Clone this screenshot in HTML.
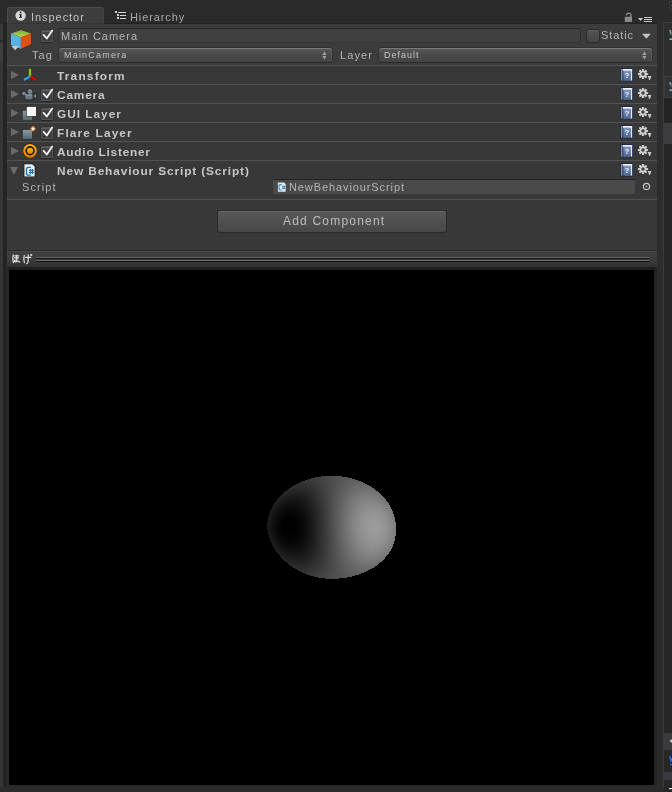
<!DOCTYPE html>
<html><head><meta charset="utf-8">
<style>
*{margin:0;padding:0;box-sizing:border-box}
html,body{width:672px;height:792px;overflow:hidden;background:#2a2a2a;font-family:"Liberation Sans",sans-serif;}
.a{position:absolute}
.t{position:absolute;white-space:nowrap;font-size:11px;line-height:1;color:#b4b4b4;will-change:transform}
.b{font-weight:bold;color:#c6c6c6;transform:scaleX(1.08);transform-origin:0 0}
.sep{position:absolute;left:7px;width:650px;height:1px;background:#525252}
.tri{position:absolute;width:0;height:0;border-top:4.5px solid transparent;border-bottom:4.5px solid transparent;border-left:8px solid #6a6a6a}
.cb{position:absolute;width:12px;height:12px;border-radius:2.5px;background:linear-gradient(#454545,#3c3c3c);box-shadow:inset 0 0 0 1px #555,inset 0 1px 0 1px #5e5e5e,0 0 0 0.6px #2a2a2a,0 1px 1px #222}
.dd{position:absolute;height:14px;border-radius:3px;background:linear-gradient(#585858,#4a4a4a 50%,#444);box-shadow:inset 0 1px 0 #7a7a7a,inset -1px 0 0 #5a5a5a,0 1px 0 #2a2a2a,0 0 0 1px #303030}
.sph i{position:absolute;width:1px;display:block}
</style></head><body>
<svg width="0" height="0" style="position:absolute"><defs>
<linearGradient id="bk" x1="0" y1="0" x2="0" y2="1"><stop offset="0" stop-color="#7d95bf"/><stop offset="1" stop-color="#4d6690"/></linearGradient>
<linearGradient id="sl" x1="0" y1="0" x2="0" y2="1"><stop offset="0" stop-color="#8a9ca6"/><stop offset="1" stop-color="#55666f"/></linearGradient>
<linearGradient id="cg" x1="0" y1="0" x2="0" y2="1"><stop offset="0" stop-color="#7fa83a"/><stop offset="1" stop-color="#b8d84a"/></linearGradient>
<radialGradient id="fl"><stop offset="0" stop-color="#fff"/><stop offset="0.35" stop-color="#ffb040"/><stop offset="0.7" stop-color="#e06800" stop-opacity="0.8"/><stop offset="1" stop-color="#803000" stop-opacity="0"/></radialGradient>
<linearGradient id="or" x1="0" y1="0" x2="0" y2="1"><stop offset="0" stop-color="#ffb400"/><stop offset="1" stop-color="#f08000"/></linearGradient>
</defs></svg>
<!-- left column -->
<div class="a" style="left:0;top:24px;width:3px;height:16px;background:#383838"></div>
<div class="a" style="left:0;top:40px;width:3px;height:1px;background:#262626"></div>
<div class="a" style="left:0;top:41px;width:3px;height:2px;background:#2f2f2f"></div>
<div class="a" style="left:0;top:43px;width:3px;height:18px;background:#3e3e3e"></div>
<div class="a" style="left:0;top:61px;width:3px;height:726px;background:#363636"></div>
<div class="a" style="left:3px;top:23px;width:3px;height:764px;background:#232323"></div>
<div class="a" style="left:6px;top:23px;width:1px;height:764px;background:#282828"></div>

<!-- top tab -->
<div class="a" style="left:7px;top:7px;width:97px;height:17px;background:#3d3d3d;border-radius:3px 3px 0 0;box-shadow:inset 1px 1px 0 #4c4c4c,inset -1px 0 0 #444"></div>

<!-- inspector panel -->
<div class="a" style="left:7px;top:23px;width:650px;height:1px;background:#222"></div>
<div class="a" style="left:7px;top:23px;width:97px;height:1px;background:#353535"></div>
<div class="a" style="left:7px;top:24px;width:650px;height:41px;background:#3c3c3c"></div>
<div class="a" style="left:7px;top:65px;width:650px;height:185px;background:#383838"></div>
<!-- bottom bar -->
<div class="a" style="left:7px;top:250px;width:650px;height:1px;background:#2a2a2a"></div>
<div class="a" style="left:7px;top:251px;width:650px;height:1px;background:#4a4a4a"></div>
<div class="a" style="left:7px;top:252px;width:650px;height:15px;background:linear-gradient(#3f3f3f,#3a3a3a 60%,#303030)"></div>

<!-- viewport -->
<div class="a" style="left:7px;top:267px;width:650px;height:520px;background:#242424;border-left:2px solid #2a2a2a;border-top:3px solid #1e1e1e;border-bottom:2px solid #2a2a2a;border-right:3px solid #232323"></div>
<div class="a" style="left:9px;top:270px;width:645px;height:515px;background:#000"></div>
<div class="sph">
<i style="left:267px;top:522px;height:8px;background:linear-gradient(#1c1c1c 6.2%,#1c1c1c 93.8%)"></i>
<i style="left:268px;top:517px;height:18px;background:linear-gradient(#1d1d1d 2.8%,#191919 50.0%,#1c1c1c 97.2%)"></i>
<i style="left:269px;top:514px;height:24px;background:linear-gradient(#1d1d1d 2.1%,#181818 34.0%,#171717 66.0%,#1c1c1c 97.9%)"></i>
<i style="left:270px;top:511px;height:30px;background:linear-gradient(#1e1e1e 1.7%,#181818 21.0%,#151515 40.3%,#151515 59.7%,#181818 79.0%,#1d1d1d 98.3%)"></i>
<i style="left:271px;top:509px;height:34px;background:linear-gradient(#1e1e1e 1.5%,#171717 20.9%,#131313 40.3%,#121212 59.7%,#161616 79.1%,#1e1e1e 98.5%)"></i>
<i style="left:272px;top:507px;height:38px;background:linear-gradient(#1f1f1f 1.3%,#171717 17.5%,#121212 33.8%,#101010 50.0%,#111111 66.2%,#161616 82.5%,#1e1e1e 98.7%)"></i>
<i style="left:273px;top:505px;height:42px;background:linear-gradient(#202020 1.2%,#181818 15.1%,#121212 29.1%,#0e0e0e 43.0%,#0e0e0e 57.0%,#111111 70.9%,#171717 84.9%,#1f1f1f 98.8%)"></i>
<i style="left:274px;top:503px;height:46px;background:linear-gradient(#212121 1.1%,#191919 13.3%,#121212 25.5%,#0e0e0e 37.8%,#0c0c0c 50.0%,#0d0d0d 62.2%,#111111 74.5%,#181818 86.7%,#202020 98.9%)"></i>
<i style="left:275px;top:502px;height:48px;background:linear-gradient(#212121 1.0%,#181818 13.3%,#111111 25.5%,#0c0c0c 37.8%,#0a0a0a 50.0%,#0b0b0b 62.2%,#101010 74.5%,#171717 86.7%,#202020 99.0%)"></i>
<i style="left:276px;top:501px;height:51px;background:linear-gradient(#222222 1.0%,#181818 11.9%,#111111 22.8%,#0b0b0b 33.7%,#090909 44.6%,#080808 55.4%,#0b0b0b 66.3%,#111111 77.2%,#181818 88.1%,#222222 99.0%)"></i>
<i style="left:277px;top:499px;height:54px;background:linear-gradient(#242424 0.9%,#191919 11.8%,#111111 22.7%,#0b0b0b 33.6%,#070707 44.5%,#070707 55.5%,#0a0a0a 66.4%,#0f0f0f 77.3%,#181818 88.2%,#222222 99.1%)"></i>
<i style="left:278px;top:498px;height:56px;background:linear-gradient(#242424 0.9%,#1a1a1a 10.7%,#111111 20.5%,#0b0b0b 30.4%,#070707 40.2%,#050505 50.0%,#060606 59.8%,#0a0a0a 69.6%,#101010 79.5%,#181818 89.3%,#222222 99.1%)"></i>
<i style="left:279px;top:497px;height:58px;background:linear-gradient(#242424 0.9%,#1a1a1a 10.7%,#111111 20.5%,#0a0a0a 30.3%,#060606 40.2%,#040404 50.0%,#050505 59.8%,#090909 69.7%,#0f0f0f 79.5%,#181818 89.3%,#222222 99.1%)"></i>
<i style="left:280px;top:496px;height:61px;background:linear-gradient(#252525 0.8%,#1b1b1b 9.8%,#121212 18.7%,#0b0b0b 27.6%,#060606 36.6%,#030303 45.5%,#030303 54.5%,#050505 63.4%,#0a0a0a 72.4%,#111111 81.3%,#1a1a1a 90.2%,#242424 99.2%)"></i>
<i style="left:281px;top:495px;height:63px;background:linear-gradient(#262626 0.8%,#1b1b1b 9.7%,#111111 18.7%,#0a0a0a 27.6%,#050505 36.6%,#020202 45.5%,#020202 54.5%,#040404 63.4%,#090909 72.4%,#111111 81.3%,#1a1a1a 90.3%,#252525 99.2%)"></i>
<i style="left:282px;top:494px;height:65px;background:linear-gradient(#272727 0.8%,#1b1b1b 9.7%,#111111 18.7%,#090909 27.6%,#040404 36.6%,#010101 45.5%,#010101 54.5%,#040404 63.4%,#090909 72.4%,#101010 81.3%,#1a1a1a 90.3%,#262626 99.2%)"></i>
<i style="left:283px;top:493px;height:67px;background:linear-gradient(#272727 0.7%,#1c1c1c 9.7%,#111111 18.7%,#090909 27.6%,#030303 36.6%,#000000 45.5%,#000000 54.5%,#030303 63.4%,#080808 72.4%,#101010 81.3%,#1b1b1b 90.3%,#262626 99.3%)"></i>
<i style="left:284px;top:492px;height:69px;background:linear-gradient(#282828 0.7%,#1c1c1c 9.7%,#111111 18.6%,#090909 27.6%,#030303 36.6%,#000000 45.5%,#000000 54.5%,#020202 63.4%,#080808 72.4%,#101010 81.4%,#1b1b1b 90.3%,#272727 99.3%)"></i>
<i style="left:285px;top:491px;height:71px;background:linear-gradient(#292929 0.7%,#1d1d1d 9.7%,#111111 18.6%,#090909 27.6%,#030303 36.6%,#000000 45.5%,#000000 54.5%,#020202 63.4%,#080808 72.4%,#101010 81.4%,#1b1b1b 90.3%,#282828 99.3%)"></i>
<i style="left:286px;top:491px;height:71px;background:linear-gradient(#292929 0.7%,#1c1c1c 9.7%,#111111 18.6%,#080808 27.6%,#020202 36.6%,#000000 45.5%,#000000 54.5%,#010101 63.4%,#070707 72.4%,#0f0f0f 81.4%,#1a1a1a 90.3%,#272727 99.3%)"></i>
<i style="left:287px;top:490px;height:73px;background:linear-gradient(#2a2a2a 0.7%,#1d1d1d 9.7%,#111111 18.6%,#080808 27.6%,#020202 36.6%,#000000 45.5%,#000000 54.5%,#010101 63.4%,#070707 72.4%,#101010 81.4%,#1b1b1b 90.3%,#282828 99.3%)"></i>
<i style="left:288px;top:489px;height:75px;background:linear-gradient(#2b2b2b 0.7%,#1e1e1e 9.6%,#121212 18.6%,#080808 27.6%,#020202 36.5%,#000000 45.5%,#000000 54.5%,#010101 63.5%,#070707 72.4%,#101010 81.4%,#1c1c1c 90.4%,#292929 99.3%)"></i>
<i style="left:289px;top:488px;height:77px;background:linear-gradient(#2c2c2c 0.6%,#1f1f1f 9.6%,#121212 18.6%,#090909 27.6%,#020202 36.5%,#000000 45.5%,#000000 54.5%,#010101 63.5%,#070707 72.4%,#101010 81.4%,#1d1d1d 90.4%,#2b2b2b 99.4%)"></i>
<i style="left:290px;top:488px;height:78px;background:linear-gradient(#2c2c2c 0.6%,#1e1e1e 9.6%,#121212 18.6%,#080808 27.6%,#020202 36.5%,#000000 45.5%,#000000 54.5%,#020202 63.5%,#080808 72.4%,#111111 81.4%,#1e1e1e 90.4%,#2c2c2c 99.4%)"></i>
<i style="left:291px;top:487px;height:79px;background:linear-gradient(#2d2d2d 0.6%,#1f1f1f 9.6%,#131313 18.6%,#090909 27.6%,#030303 36.5%,#000000 45.5%,#000000 54.5%,#010101 63.5%,#070707 72.4%,#111111 81.4%,#1d1d1d 90.4%,#2b2b2b 99.4%)"></i>
<i style="left:292px;top:486px;height:81px;background:linear-gradient(#2f2f2f 0.6%,#202020 9.6%,#141414 18.6%,#0a0a0a 27.6%,#030303 36.5%,#000000 45.5%,#000000 54.5%,#020202 63.5%,#080808 72.4%,#121212 81.4%,#1e1e1e 90.4%,#2d2d2d 99.4%)"></i>
<i style="left:293px;top:486px;height:82px;background:linear-gradient(#2e2e2e 0.6%,#202020 9.6%,#141414 18.6%,#0a0a0a 27.5%,#030303 36.5%,#000000 45.5%,#000000 54.5%,#030303 63.5%,#090909 72.5%,#131313 81.4%,#1f1f1f 90.4%,#2e2e2e 99.4%)"></i>
<i style="left:294px;top:485px;height:83px;background:linear-gradient(#303030 0.6%,#222222 9.6%,#151515 18.6%,#0b0b0b 27.5%,#040404 36.5%,#010101 45.5%,#000000 54.5%,#030303 63.5%,#090909 72.5%,#121212 81.4%,#1f1f1f 90.4%,#2e2e2e 99.4%)"></i>
<i style="left:295px;top:485px;height:84px;background:linear-gradient(#303030 0.6%,#212121 9.6%,#151515 18.6%,#0b0b0b 27.5%,#050505 36.5%,#010101 45.5%,#010101 54.5%,#040404 63.5%,#0a0a0a 72.5%,#141414 81.4%,#202020 90.4%,#2f2f2f 99.4%)"></i>
<i style="left:296px;top:484px;height:85px;background:linear-gradient(#313131 0.6%,#232323 9.6%,#161616 18.6%,#0d0d0d 27.5%,#060606 36.5%,#020202 45.5%,#020202 54.5%,#040404 63.5%,#0a0a0a 72.5%,#141414 81.4%,#202020 90.4%,#2f2f2f 99.4%)"></i>
<i style="left:297px;top:484px;height:86px;background:linear-gradient(#313131 0.6%,#232323 9.6%,#171717 18.6%,#0d0d0d 27.5%,#060606 36.5%,#030303 45.5%,#030303 54.5%,#050505 63.5%,#0b0b0b 72.5%,#151515 81.4%,#222222 90.4%,#313131 99.4%)"></i>
<i style="left:298px;top:483px;height:88px;background:linear-gradient(#333333 0.6%,#252525 9.6%,#181818 18.5%,#0e0e0e 27.5%,#070707 36.5%,#040404 45.5%,#040404 54.5%,#060606 63.5%,#0c0c0c 72.5%,#161616 81.5%,#232323 90.4%,#323232 99.4%)"></i>
<i style="left:299px;top:483px;height:88px;background:linear-gradient(#333333 0.6%,#252525 9.6%,#181818 18.5%,#0f0f0f 27.5%,#090909 36.5%,#050505 45.5%,#050505 54.5%,#070707 63.5%,#0d0d0d 72.5%,#171717 81.5%,#232323 90.4%,#323232 99.4%)"></i>
<i style="left:300px;top:482px;height:90px;background:linear-gradient(#353535 0.6%,#262626 9.5%,#1a1a1a 18.5%,#101010 27.5%,#0a0a0a 36.5%,#060606 45.5%,#060606 54.5%,#080808 63.5%,#0e0e0e 72.5%,#181818 81.5%,#252525 90.5%,#343434 99.4%)"></i>
<i style="left:301px;top:482px;height:90px;background:linear-gradient(#353535 0.6%,#272727 9.5%,#1b1b1b 18.5%,#111111 27.5%,#0b0b0b 36.5%,#080808 45.5%,#070707 54.5%,#0a0a0a 63.5%,#0f0f0f 72.5%,#191919 81.5%,#252525 90.5%,#343434 99.4%)"></i>
<i style="left:302px;top:481px;height:92px;background:linear-gradient(#363636 0.5%,#292929 9.5%,#1c1c1c 18.5%,#131313 27.5%,#0c0c0c 36.5%,#090909 45.5%,#090909 54.5%,#0b0b0b 63.5%,#111111 72.5%,#1a1a1a 81.5%,#272727 90.5%,#353535 99.5%)"></i>
<i style="left:303px;top:481px;height:92px;background:linear-gradient(#373737 0.5%,#292929 9.5%,#1d1d1d 18.5%,#141414 27.5%,#0e0e0e 36.5%,#0b0b0b 45.5%,#0a0a0a 54.5%,#0c0c0c 63.5%,#121212 72.5%,#1b1b1b 81.5%,#272727 90.5%,#353535 99.5%)"></i>
<i style="left:304px;top:481px;height:92px;background:linear-gradient(#373737 0.5%,#2a2a2a 9.5%,#1e1e1e 18.5%,#151515 27.5%,#0f0f0f 36.5%,#0c0c0c 45.5%,#0c0c0c 54.5%,#0e0e0e 63.5%,#131313 72.5%,#1c1c1c 81.5%,#282828 90.5%,#353535 99.5%)"></i>
<i style="left:305px;top:480px;height:94px;background:linear-gradient(#383838 0.5%,#2b2b2b 9.5%,#202020 18.5%,#171717 27.5%,#111111 36.5%,#0e0e0e 45.5%,#0d0d0d 54.5%,#0f0f0f 63.5%,#151515 72.5%,#1d1d1d 81.5%,#292929 90.5%,#373737 99.5%)"></i>
<i style="left:306px;top:480px;height:94px;background:linear-gradient(#393939 0.5%,#2c2c2c 9.5%,#212121 18.5%,#181818 27.5%,#131313 36.5%,#101010 45.5%,#0f0f0f 54.5%,#111111 63.5%,#161616 72.5%,#1e1e1e 81.5%,#2a2a2a 90.5%,#373737 99.5%)"></i>
<i style="left:307px;top:480px;height:95px;background:linear-gradient(#393939 0.5%,#2d2d2d 9.5%,#222222 18.5%,#1a1a1a 27.5%,#141414 36.5%,#111111 45.5%,#111111 54.5%,#131313 63.5%,#181818 72.5%,#202020 81.5%,#2c2c2c 90.5%,#393939 99.5%)"></i>
<i style="left:308px;top:479px;height:96px;background:linear-gradient(#3b3b3b 0.5%,#2f2f2f 9.5%,#242424 18.5%,#1c1c1c 27.5%,#161616 36.5%,#131313 45.5%,#131313 54.5%,#141414 63.5%,#191919 72.5%,#212121 81.5%,#2c2c2c 90.5%,#393939 99.5%)"></i>
<i style="left:309px;top:479px;height:96px;background:linear-gradient(#3b3b3b 0.5%,#303030 9.5%,#252525 18.5%,#1d1d1d 27.5%,#181818 36.5%,#151515 45.5%,#151515 54.5%,#161616 63.5%,#1b1b1b 72.5%,#222222 81.5%,#2d2d2d 90.5%,#3a3a3a 99.5%)"></i>
<i style="left:310px;top:479px;height:97px;background:linear-gradient(#3c3c3c 0.5%,#303030 9.5%,#272727 18.5%,#1f1f1f 27.5%,#1a1a1a 36.5%,#171717 45.5%,#171717 54.5%,#181818 63.5%,#1d1d1d 72.5%,#242424 81.5%,#2f2f2f 90.5%,#3c3c3c 99.5%)"></i>
<i style="left:311px;top:478px;height:98px;background:linear-gradient(#3d3d3d 0.5%,#323232 9.5%,#292929 18.5%,#212121 27.5%,#1c1c1c 36.5%,#1a1a1a 45.5%,#191919 54.5%,#1a1a1a 63.5%,#1e1e1e 72.5%,#262626 81.5%,#303030 90.5%,#3c3c3c 99.5%)"></i>
<i style="left:312px;top:478px;height:98px;background:linear-gradient(#3e3e3e 0.5%,#333333 9.5%,#2a2a2a 18.5%,#232323 27.5%,#1e1e1e 36.5%,#1c1c1c 45.5%,#1b1b1b 54.5%,#1c1c1c 63.5%,#202020 72.5%,#272727 81.5%,#313131 90.5%,#3c3c3c 99.5%)"></i>
<i style="left:313px;top:478px;height:98px;background:linear-gradient(#3e3e3e 0.5%,#343434 9.5%,#2c2c2c 18.5%,#252525 27.5%,#202020 36.5%,#1e1e1e 45.5%,#1d1d1d 54.5%,#1e1e1e 63.5%,#222222 72.5%,#282828 81.5%,#323232 90.5%,#3d3d3d 99.5%)"></i>
<i style="left:314px;top:478px;height:99px;background:linear-gradient(#3f3f3f 0.5%,#353535 9.5%,#2d2d2d 18.5%,#272727 27.5%,#222222 36.5%,#202020 45.5%,#1f1f1f 54.5%,#202020 63.5%,#242424 72.5%,#2a2a2a 81.5%,#343434 90.5%,#3f3f3f 99.5%)"></i>
<i style="left:315px;top:477px;height:100px;background:linear-gradient(#404040 0.5%,#373737 9.5%,#2f2f2f 18.5%,#292929 27.5%,#252525 36.5%,#232323 45.5%,#222222 54.5%,#222222 63.5%,#262626 72.5%,#2c2c2c 81.5%,#353535 90.5%,#3f3f3f 99.5%)"></i>
<i style="left:316px;top:477px;height:100px;background:linear-gradient(#414141 0.5%,#383838 9.5%,#313131 18.5%,#2b2b2b 27.5%,#272727 36.5%,#252525 45.5%,#242424 54.5%,#252525 63.5%,#282828 72.5%,#2d2d2d 81.5%,#363636 90.5%,#404040 99.5%)"></i>
<i style="left:317px;top:477px;height:100px;background:linear-gradient(#424242 0.5%,#393939 9.5%,#323232 18.5%,#2d2d2d 27.5%,#292929 36.5%,#272727 45.5%,#262626 54.5%,#272727 63.5%,#292929 72.5%,#2f2f2f 81.5%,#373737 90.5%,#404040 99.5%)"></i>
<i style="left:318px;top:477px;height:101px;background:linear-gradient(#424242 0.5%,#3b3b3b 9.5%,#343434 18.5%,#2f2f2f 27.5%,#2b2b2b 36.5%,#2a2a2a 45.5%,#292929 54.5%,#292929 63.5%,#2c2c2c 72.5%,#313131 81.5%,#393939 90.5%,#424242 99.5%)"></i>
<i style="left:319px;top:477px;height:101px;background:linear-gradient(#434343 0.5%,#3c3c3c 9.5%,#363636 18.5%,#313131 27.5%,#2e2e2e 36.5%,#2c2c2c 45.5%,#2b2b2b 54.5%,#2c2c2c 63.5%,#2e2e2e 72.5%,#333333 81.5%,#3a3a3a 90.5%,#434343 99.5%)"></i>
<i style="left:320px;top:477px;height:101px;background:linear-gradient(#444444 0.5%,#3d3d3d 9.5%,#383838 18.5%,#333333 27.5%,#303030 36.5%,#2f2f2f 45.5%,#2e2e2e 54.5%,#2e2e2e 63.5%,#303030 72.5%,#343434 81.5%,#3b3b3b 90.5%,#434343 99.5%)"></i>
<i style="left:321px;top:476px;height:102px;background:linear-gradient(#454545 0.5%,#3f3f3f 9.5%,#3a3a3a 18.5%,#363636 27.5%,#333333 36.5%,#313131 45.5%,#313131 54.5%,#303030 63.5%,#323232 72.5%,#363636 81.5%,#3c3c3c 90.5%,#444444 99.5%)"></i>
<i style="left:322px;top:476px;height:102px;background:linear-gradient(#464646 0.5%,#404040 9.5%,#3c3c3c 18.5%,#383838 27.5%,#353535 36.5%,#343434 45.5%,#333333 54.5%,#333333 63.5%,#343434 72.5%,#383838 81.5%,#3d3d3d 90.5%,#454545 99.5%)"></i>
<i style="left:323px;top:476px;height:102px;background:linear-gradient(#464646 0.5%,#424242 9.5%,#3d3d3d 18.5%,#3a3a3a 27.5%,#383838 36.5%,#373737 45.5%,#363636 54.5%,#353535 63.5%,#363636 72.5%,#3a3a3a 81.5%,#3f3f3f 90.5%,#454545 99.5%)"></i>
<i style="left:324px;top:476px;height:102px;background:linear-gradient(#474747 0.5%,#434343 9.5%,#3f3f3f 18.5%,#3c3c3c 27.5%,#3a3a3a 36.5%,#393939 45.5%,#383838 54.5%,#383838 63.5%,#393939 72.5%,#3b3b3b 81.5%,#404040 90.5%,#464646 99.5%)"></i>
<i style="left:325px;top:476px;height:103px;background:linear-gradient(#484848 0.5%,#444444 9.5%,#414141 18.5%,#3f3f3f 27.5%,#3d3d3d 36.5%,#3c3c3c 45.5%,#3b3b3b 54.5%,#3a3a3a 63.5%,#3b3b3b 72.5%,#3d3d3d 81.5%,#424242 90.5%,#484848 99.5%)"></i>
<i style="left:326px;top:476px;height:103px;background:linear-gradient(#494949 0.5%,#464646 9.5%,#434343 18.5%,#414141 27.5%,#3f3f3f 36.5%,#3f3f3f 45.5%,#3e3e3e 54.5%,#3d3d3d 63.5%,#3d3d3d 72.5%,#3f3f3f 81.5%,#434343 90.5%,#484848 99.5%)"></i>
<i style="left:327px;top:476px;height:103px;background:linear-gradient(#494949 0.5%,#474747 9.5%,#454545 18.5%,#434343 27.5%,#424242 36.5%,#414141 45.5%,#404040 54.5%,#3f3f3f 63.5%,#3f3f3f 72.5%,#414141 81.5%,#444444 90.5%,#494949 99.5%)"></i>
<i style="left:328px;top:476px;height:103px;background:linear-gradient(#4a4a4a 0.5%,#484848 9.5%,#474747 18.5%,#454545 27.5%,#454545 36.5%,#444444 45.5%,#434343 54.5%,#424242 63.5%,#424242 72.5%,#434343 81.5%,#464646 90.5%,#4a4a4a 99.5%)"></i>
<i style="left:329px;top:476px;height:103px;background:linear-gradient(#4b4b4b 0.5%,#4a4a4a 9.5%,#494949 18.5%,#484848 27.5%,#474747 36.5%,#474747 45.5%,#464646 54.5%,#454545 63.5%,#444444 72.5%,#454545 81.5%,#474747 90.5%,#4b4b4b 99.5%)"></i>
<i style="left:330px;top:476px;height:103px;background:linear-gradient(#4c4c4c 0.5%,#4b4b4b 9.5%,#4b4b4b 18.5%,#4a4a4a 27.5%,#4a4a4a 36.5%,#4a4a4a 45.5%,#494949 54.5%,#474747 63.5%,#464646 72.5%,#474747 81.5%,#494949 90.5%,#4b4b4b 99.5%)"></i>
<i style="left:331px;top:476px;height:103px;background:linear-gradient(#4c4c4c 0.5%,#4c4c4c 9.5%,#4c4c4c 18.5%,#4c4c4c 27.5%,#4c4c4c 36.5%,#4c4c4c 45.5%,#4b4b4b 54.5%,#4a4a4a 63.5%,#494949 72.5%,#494949 81.5%,#4a4a4a 90.5%,#4c4c4c 99.5%)"></i>
<i style="left:332px;top:476px;height:103px;background:linear-gradient(#4d4d4d 0.5%,#4e4e4e 9.5%,#4e4e4e 18.5%,#4f4f4f 27.5%,#4f4f4f 36.5%,#4f4f4f 45.5%,#4e4e4e 54.5%,#4c4c4c 63.5%,#4b4b4b 72.5%,#4b4b4b 81.5%,#4b4b4b 90.5%,#4d4d4d 99.5%)"></i>
<i style="left:333px;top:476px;height:103px;background:linear-gradient(#4e4e4e 0.5%,#4f4f4f 9.5%,#505050 18.5%,#515151 27.5%,#525252 36.5%,#525252 45.5%,#515151 54.5%,#4f4f4f 63.5%,#4d4d4d 72.5%,#4d4d4d 81.5%,#4d4d4d 90.5%,#4e4e4e 99.5%)"></i>
<i style="left:334px;top:476px;height:103px;background:linear-gradient(#4f4f4f 0.5%,#515151 9.5%,#525252 18.5%,#545454 27.5%,#545454 36.5%,#555555 45.5%,#545454 54.5%,#525252 63.5%,#505050 72.5%,#4e4e4e 81.5%,#4e4e4e 90.5%,#4e4e4e 99.5%)"></i>
<i style="left:335px;top:476px;height:103px;background:linear-gradient(#505050 0.5%,#525252 9.5%,#545454 18.5%,#565656 27.5%,#575757 36.5%,#585858 45.5%,#565656 54.5%,#545454 63.5%,#525252 72.5%,#505050 81.5%,#4f4f4f 90.5%,#4f4f4f 99.5%)"></i>
<i style="left:336px;top:476px;height:103px;background:linear-gradient(#505050 0.5%,#535353 9.5%,#565656 18.5%,#585858 27.5%,#5a5a5a 36.5%,#5a5a5a 45.5%,#595959 54.5%,#575757 63.5%,#545454 72.5%,#525252 81.5%,#515151 90.5%,#505050 99.5%)"></i>
<i style="left:337px;top:476px;height:103px;background:linear-gradient(#515151 0.5%,#555555 9.5%,#585858 18.5%,#5a5a5a 27.5%,#5c5c5c 36.5%,#5d5d5d 45.5%,#5c5c5c 54.5%,#595959 63.5%,#575757 72.5%,#545454 81.5%,#525252 90.5%,#515151 99.5%)"></i>
<i style="left:338px;top:476px;height:103px;background:linear-gradient(#525252 0.5%,#565656 9.5%,#5a5a5a 18.5%,#5d5d5d 27.5%,#5f5f5f 36.5%,#606060 45.5%,#5f5f5f 54.5%,#5c5c5c 63.5%,#595959 72.5%,#565656 81.5%,#535353 90.5%,#515151 99.5%)"></i>
<i style="left:339px;top:476px;height:102px;background:linear-gradient(#535353 0.5%,#575757 9.5%,#5c5c5c 18.5%,#5f5f5f 27.5%,#616161 36.5%,#626262 45.5%,#616161 54.5%,#5f5f5f 63.5%,#5c5c5c 72.5%,#585858 81.5%,#555555 90.5%,#525252 99.5%)"></i>
<i style="left:340px;top:476px;height:102px;background:linear-gradient(#535353 0.5%,#595959 9.5%,#5d5d5d 18.5%,#616161 27.5%,#646464 36.5%,#656565 45.5%,#646464 54.5%,#616161 63.5%,#5e5e5e 72.5%,#5a5a5a 81.5%,#575757 90.5%,#535353 99.5%)"></i>
<i style="left:341px;top:476px;height:102px;background:linear-gradient(#545454 0.5%,#5a5a5a 9.5%,#5f5f5f 18.5%,#636363 27.5%,#666666 36.5%,#686868 45.5%,#676767 54.5%,#646464 63.5%,#606060 72.5%,#5c5c5c 81.5%,#585858 90.5%,#545454 99.5%)"></i>
<i style="left:342px;top:477px;height:101px;background:linear-gradient(#555555 0.5%,#5c5c5c 9.5%,#616161 18.5%,#666666 27.5%,#696969 36.5%,#6a6a6a 45.5%,#696969 54.5%,#666666 63.5%,#626262 72.5%,#5e5e5e 81.5%,#595959 90.5%,#555555 99.5%)"></i>
<i style="left:343px;top:477px;height:101px;background:linear-gradient(#565656 0.5%,#5d5d5d 9.5%,#636363 18.5%,#686868 27.5%,#6b6b6b 36.5%,#6d6d6d 45.5%,#6c6c6c 54.5%,#696969 63.5%,#646464 72.5%,#606060 81.5%,#5a5a5a 90.5%,#555555 99.5%)"></i>
<i style="left:344px;top:477px;height:101px;background:linear-gradient(#575757 0.5%,#5e5e5e 9.5%,#656565 18.5%,#6a6a6a 27.5%,#6e6e6e 36.5%,#6f6f6f 45.5%,#6e6e6e 54.5%,#6b6b6b 63.5%,#676767 72.5%,#616161 81.5%,#5c5c5c 90.5%,#565656 99.5%)"></i>
<i style="left:345px;top:477px;height:101px;background:linear-gradient(#575757 0.5%,#606060 9.5%,#676767 18.5%,#6c6c6c 27.5%,#707070 36.5%,#727272 45.5%,#717171 54.5%,#6d6d6d 63.5%,#696969 72.5%,#636363 81.5%,#5d5d5d 90.5%,#575757 99.5%)"></i>
<i style="left:346px;top:477px;height:101px;background:linear-gradient(#585858 0.5%,#616161 9.5%,#686868 18.5%,#6e6e6e 27.5%,#727272 36.5%,#747474 45.5%,#737373 54.5%,#707070 63.5%,#6b6b6b 72.5%,#656565 81.5%,#5e5e5e 90.5%,#575757 99.5%)"></i>
<i style="left:347px;top:477px;height:100px;background:linear-gradient(#595959 0.5%,#626262 9.5%,#6a6a6a 18.5%,#707070 27.5%,#747474 36.5%,#767676 45.5%,#767676 54.5%,#727272 63.5%,#6d6d6d 72.5%,#676767 81.5%,#606060 90.5%,#595959 99.5%)"></i>
<i style="left:348px;top:478px;height:99px;background:linear-gradient(#5a5a5a 0.5%,#646464 9.5%,#6c6c6c 18.5%,#727272 27.5%,#777777 36.5%,#797979 45.5%,#787878 54.5%,#747474 63.5%,#6f6f6f 72.5%,#696969 81.5%,#616161 90.5%,#595959 99.5%)"></i>
<i style="left:349px;top:478px;height:99px;background:linear-gradient(#5b5b5b 0.5%,#656565 9.5%,#6e6e6e 18.5%,#747474 27.5%,#797979 36.5%,#7b7b7b 45.5%,#7a7a7a 54.5%,#777777 63.5%,#717171 72.5%,#6a6a6a 81.5%,#626262 90.5%,#5a5a5a 99.5%)"></i>
<i style="left:350px;top:478px;height:99px;background:linear-gradient(#5b5b5b 0.5%,#666666 9.5%,#6f6f6f 18.5%,#767676 27.5%,#7b7b7b 36.5%,#7d7d7d 45.5%,#7d7d7d 54.5%,#797979 63.5%,#737373 72.5%,#6c6c6c 81.5%,#636363 90.5%,#5a5a5a 99.5%)"></i>
<i style="left:351px;top:478px;height:99px;background:linear-gradient(#5c5c5c 0.5%,#676767 9.5%,#707070 18.5%,#787878 27.5%,#7d7d7d 36.5%,#808080 45.5%,#7f7f7f 54.5%,#7b7b7b 63.5%,#757575 72.5%,#6d6d6d 81.5%,#646464 90.5%,#5b5b5b 99.5%)"></i>
<i style="left:352px;top:479px;height:97px;background:linear-gradient(#5d5d5d 0.5%,#696969 9.5%,#727272 18.5%,#7a7a7a 27.5%,#7f7f7f 36.5%,#828282 45.5%,#818181 54.5%,#7d7d7d 63.5%,#777777 72.5%,#6f6f6f 81.5%,#666666 90.5%,#5c5c5c 99.5%)"></i>
<i style="left:353px;top:479px;height:97px;background:linear-gradient(#5e5e5e 0.5%,#6a6a6a 9.5%,#747474 18.5%,#7c7c7c 27.5%,#818181 36.5%,#848484 45.5%,#838383 54.5%,#7f7f7f 63.5%,#797979 72.5%,#717171 81.5%,#676767 90.5%,#5d5d5d 99.5%)"></i>
<i style="left:354px;top:479px;height:97px;background:linear-gradient(#5e5e5e 0.5%,#6a6a6a 9.5%,#757575 18.5%,#7d7d7d 27.5%,#838383 36.5%,#868686 45.5%,#858585 54.5%,#818181 63.5%,#7b7b7b 72.5%,#727272 81.5%,#686868 90.5%,#5d5d5d 99.5%)"></i>
<i style="left:355px;top:480px;height:95px;background:linear-gradient(#606060 0.5%,#6c6c6c 9.5%,#777777 18.5%,#7f7f7f 27.5%,#858585 36.5%,#888888 45.5%,#878787 54.5%,#838383 63.5%,#7d7d7d 72.5%,#747474 81.5%,#6a6a6a 90.5%,#5f5f5f 99.5%)"></i>
<i style="left:356px;top:480px;height:95px;background:linear-gradient(#606060 0.5%,#6d6d6d 9.5%,#787878 18.5%,#818181 27.5%,#878787 36.5%,#898989 45.5%,#898989 54.5%,#858585 63.5%,#7e7e7e 72.5%,#757575 81.5%,#6b6b6b 90.5%,#5f5f5f 99.5%)"></i>
<i style="left:357px;top:480px;height:95px;background:linear-gradient(#616161 0.5%,#6e6e6e 9.5%,#797979 18.5%,#828282 27.5%,#888888 36.5%,#8b8b8b 45.5%,#8a8a8a 54.5%,#868686 63.5%,#808080 72.5%,#777777 81.5%,#6c6c6c 90.5%,#606060 99.5%)"></i>
<i style="left:358px;top:481px;height:94px;background:linear-gradient(#626262 0.5%,#707070 9.5%,#7b7b7b 18.5%,#848484 27.5%,#8a8a8a 36.5%,#8d8d8d 45.5%,#8c8c8c 54.5%,#888888 63.5%,#818181 72.5%,#787878 81.5%,#6c6c6c 90.5%,#606060 99.5%)"></i>
<i style="left:359px;top:481px;height:93px;background:linear-gradient(#626262 0.5%,#707070 9.5%,#7c7c7c 18.5%,#858585 27.5%,#8b8b8b 36.5%,#8e8e8e 45.5%,#8e8e8e 54.5%,#8a8a8a 63.5%,#838383 72.5%,#7a7a7a 81.5%,#6e6e6e 90.5%,#626262 99.5%)"></i>
<i style="left:360px;top:481px;height:93px;background:linear-gradient(#636363 0.5%,#717171 9.5%,#7d7d7d 18.5%,#868686 27.5%,#8d8d8d 36.5%,#909090 45.5%,#8f8f8f 54.5%,#8b8b8b 63.5%,#848484 72.5%,#7b7b7b 81.5%,#6f6f6f 90.5%,#626262 99.5%)"></i>
<i style="left:361px;top:482px;height:91px;background:linear-gradient(#646464 0.5%,#727272 9.5%,#7f7f7f 18.5%,#888888 27.5%,#8e8e8e 36.5%,#919191 45.5%,#919191 54.5%,#8d8d8d 63.5%,#868686 72.5%,#7c7c7c 81.5%,#717171 90.5%,#636363 99.5%)"></i>
<i style="left:362px;top:482px;height:91px;background:linear-gradient(#646464 0.5%,#737373 9.5%,#7f7f7f 18.5%,#898989 27.5%,#8f8f8f 36.5%,#939393 45.5%,#929292 54.5%,#8e8e8e 63.5%,#878787 72.5%,#7d7d7d 81.5%,#717171 90.5%,#646464 99.5%)"></i>
<i style="left:363px;top:483px;height:90px;background:linear-gradient(#666666 0.6%,#757575 9.5%,#818181 18.5%,#8b8b8b 27.5%,#919191 36.5%,#949494 45.5%,#939393 54.5%,#8f8f8f 63.5%,#888888 72.5%,#7e7e7e 81.5%,#727272 90.5%,#646464 99.4%)"></i>
<i style="left:364px;top:483px;height:89px;background:linear-gradient(#666666 0.6%,#757575 9.6%,#818181 18.5%,#8b8b8b 27.5%,#929292 36.5%,#959595 45.5%,#959595 54.5%,#919191 63.5%,#898989 72.5%,#808080 81.5%,#737373 90.4%,#656565 99.4%)"></i>
<i style="left:365px;top:484px;height:88px;background:linear-gradient(#686868 0.6%,#767676 9.6%,#838383 18.5%,#8d8d8d 27.5%,#939393 36.5%,#969696 45.5%,#969696 54.5%,#919191 63.5%,#8a8a8a 72.5%,#808080 81.5%,#747474 90.4%,#656565 99.4%)"></i>
<i style="left:366px;top:484px;height:87px;background:linear-gradient(#686868 0.6%,#767676 9.6%,#838383 18.5%,#8d8d8d 27.5%,#949494 36.5%,#979797 45.5%,#979797 54.5%,#939393 63.5%,#8c8c8c 72.5%,#828282 81.5%,#757575 90.4%,#676767 99.4%)"></i>
<i style="left:367px;top:485px;height:86px;background:linear-gradient(#696969 0.6%,#787878 9.6%,#858585 18.6%,#8e8e8e 27.5%,#959595 36.5%,#989898 45.5%,#979797 54.5%,#939393 63.5%,#8c8c8c 72.5%,#828282 81.4%,#757575 90.4%,#676767 99.4%)"></i>
<i style="left:368px;top:485px;height:85px;background:linear-gradient(#696969 0.6%,#787878 9.6%,#858585 18.6%,#8f8f8f 27.5%,#959595 36.5%,#999999 45.5%,#989898 54.5%,#949494 63.5%,#8d8d8d 72.5%,#848484 81.4%,#777777 90.4%,#696969 99.4%)"></i>
<i style="left:369px;top:486px;height:84px;background:linear-gradient(#6b6b6b 0.6%,#797979 9.6%,#868686 18.6%,#909090 27.5%,#969696 36.5%,#999999 45.5%,#999999 54.5%,#959595 63.5%,#8e8e8e 72.5%,#848484 81.4%,#777777 90.4%,#686868 99.4%)"></i>
<i style="left:370px;top:486px;height:83px;background:linear-gradient(#6a6a6a 0.6%,#797979 9.6%,#868686 18.6%,#909090 27.5%,#969696 36.5%,#9a9a9a 45.5%,#999999 54.5%,#969696 63.5%,#8f8f8f 72.5%,#858585 81.4%,#797979 90.4%,#6a6a6a 99.4%)"></i>
<i style="left:371px;top:487px;height:82px;background:linear-gradient(#6c6c6c 0.6%,#7a7a7a 9.6%,#878787 18.6%,#919191 27.5%,#979797 36.5%,#9a9a9a 45.5%,#9a9a9a 54.5%,#969696 63.5%,#8f8f8f 72.5%,#858585 81.4%,#787878 90.4%,#6a6a6a 99.4%)"></i>
<i style="left:372px;top:488px;height:80px;background:linear-gradient(#6d6d6d 0.6%,#7b7b7b 9.6%,#888888 18.6%,#919191 27.6%,#979797 36.5%,#9a9a9a 45.5%,#9a9a9a 54.5%,#969696 63.5%,#909090 72.4%,#868686 81.4%,#797979 90.4%,#6b6b6b 99.4%)"></i>
<i style="left:373px;top:488px;height:80px;background:linear-gradient(#6d6d6d 0.6%,#7b7b7b 9.6%,#878787 18.6%,#919191 27.6%,#989898 36.5%,#9b9b9b 45.5%,#9a9a9a 54.5%,#979797 63.5%,#909090 72.4%,#868686 81.4%,#797979 90.4%,#6b6b6b 99.4%)"></i>
<i style="left:374px;top:489px;height:78px;background:linear-gradient(#6e6e6e 0.6%,#7c7c7c 9.6%,#888888 18.6%,#919191 27.6%,#989898 36.5%,#9b9b9b 45.5%,#9a9a9a 54.5%,#979797 63.5%,#909090 72.4%,#878787 81.4%,#7a7a7a 90.4%,#6c6c6c 99.4%)"></i>
<i style="left:375px;top:490px;height:76px;background:linear-gradient(#6f6f6f 0.7%,#7d7d7d 9.6%,#898989 18.6%,#929292 27.6%,#989898 36.5%,#9b9b9b 45.5%,#9a9a9a 54.5%,#979797 63.5%,#909090 72.4%,#878787 81.4%,#7b7b7b 90.4%,#6e6e6e 99.3%)"></i>
<i style="left:376px;top:491px;height:75px;background:linear-gradient(#707070 0.7%,#7e7e7e 9.6%,#898989 18.6%,#929292 27.6%,#989898 36.5%,#9a9a9a 45.5%,#9a9a9a 54.5%,#969696 63.5%,#909090 72.4%,#868686 81.4%,#7b7b7b 90.4%,#6d6d6d 99.3%)"></i>
<i style="left:377px;top:491px;height:74px;background:linear-gradient(#707070 0.7%,#7d7d7d 9.6%,#888888 18.6%,#919191 27.6%,#979797 36.5%,#9a9a9a 45.5%,#9a9a9a 54.5%,#979797 63.5%,#909090 72.4%,#878787 81.4%,#7c7c7c 90.4%,#6e6e6e 99.3%)"></i>
<i style="left:378px;top:492px;height:72px;background:linear-gradient(#717171 0.7%,#7d7d7d 9.7%,#898989 18.6%,#919191 27.6%,#979797 36.6%,#9a9a9a 45.5%,#999999 54.5%,#969696 63.4%,#909090 72.4%,#888888 81.4%,#7c7c7c 90.3%,#707070 99.3%)"></i>
<i style="left:379px;top:493px;height:70px;background:linear-gradient(#727272 0.7%,#7e7e7e 9.7%,#898989 18.6%,#919191 27.6%,#969696 36.6%,#999999 45.5%,#999999 54.5%,#969696 63.4%,#909090 72.4%,#888888 81.4%,#7d7d7d 90.3%,#717171 99.3%)"></i>
<i style="left:380px;top:494px;height:68px;background:linear-gradient(#727272 0.7%,#7e7e7e 9.7%,#898989 18.6%,#909090 27.6%,#969696 36.6%,#989898 45.5%,#989898 54.5%,#959595 63.4%,#909090 72.4%,#888888 81.4%,#7e7e7e 90.3%,#727272 99.3%)"></i>
<i style="left:381px;top:495px;height:67px;background:linear-gradient(#737373 0.7%,#7f7f7f 9.7%,#898989 18.7%,#909090 27.6%,#959595 36.6%,#979797 45.5%,#979797 54.5%,#949494 63.4%,#8f8f8f 72.4%,#878787 81.3%,#7d7d7d 90.3%,#717171 99.3%)"></i>
<i style="left:382px;top:496px;height:65px;background:linear-gradient(#747474 0.8%,#7f7f7f 9.7%,#888888 18.7%,#909090 27.6%,#949494 36.6%,#969696 45.5%,#969696 54.5%,#939393 63.4%,#8e8e8e 72.4%,#878787 81.3%,#7d7d7d 90.3%,#727272 99.2%)"></i>
<i style="left:383px;top:497px;height:63px;background:linear-gradient(#757575 0.8%,#7f7f7f 9.7%,#888888 18.7%,#8f8f8f 27.6%,#939393 36.6%,#959595 45.5%,#959595 54.5%,#939393 63.4%,#8e8e8e 72.4%,#868686 81.3%,#7d7d7d 90.3%,#727272 99.2%)"></i>
<i style="left:384px;top:498px;height:61px;background:linear-gradient(#757575 0.8%,#7f7f7f 9.8%,#878787 18.7%,#8e8e8e 27.6%,#929292 36.6%,#949494 45.5%,#949494 54.5%,#919191 63.4%,#8d8d8d 72.4%,#868686 81.3%,#7d7d7d 90.2%,#737373 99.2%)"></i>
<i style="left:385px;top:499px;height:58px;background:linear-gradient(#757575 0.9%,#7f7f7f 10.7%,#888888 20.5%,#8e8e8e 30.3%,#929292 40.2%,#939393 50.0%,#929292 59.8%,#8e8e8e 69.7%,#888888 79.5%,#808080 89.3%,#757575 99.1%)"></i>
<i style="left:386px;top:501px;height:55px;background:linear-gradient(#777777 0.9%,#808080 10.7%,#888888 20.5%,#8d8d8d 30.4%,#909090 40.2%,#919191 50.0%,#909090 59.8%,#8d8d8d 69.6%,#878787 79.5%,#7f7f7f 89.3%,#767676 99.1%)"></i>
<i style="left:387px;top:502px;height:53px;background:linear-gradient(#787878 0.9%,#818181 11.8%,#888888 22.7%,#8d8d8d 33.6%,#8f8f8f 44.5%,#8f8f8f 55.5%,#8d8d8d 66.4%,#878787 77.3%,#808080 88.2%,#767676 99.1%)"></i>
<i style="left:388px;top:503px;height:51px;background:linear-gradient(#787878 1.0%,#808080 11.9%,#878787 22.8%,#8b8b8b 33.7%,#8d8d8d 44.6%,#8d8d8d 55.4%,#8b8b8b 66.3%,#868686 77.2%,#7f7f7f 88.1%,#767676 99.0%)"></i>
<i style="left:389px;top:505px;height:47px;background:linear-gradient(#797979 1.1%,#818181 13.3%,#878787 25.5%,#8b8b8b 37.8%,#8c8c8c 50.0%,#8b8b8b 62.2%,#878787 74.5%,#808080 86.7%,#787878 98.9%)"></i>
<i style="left:390px;top:507px;height:44px;background:linear-gradient(#7a7a7a 1.1%,#828282 15.1%,#878787 29.1%,#898989 43.0%,#898989 57.0%,#868686 70.9%,#808080 84.9%,#787878 98.9%)"></i>
<i style="left:391px;top:509px;height:40px;background:linear-gradient(#7b7b7b 1.2%,#818181 15.2%,#858585 29.1%,#878787 43.0%,#878787 57.0%,#858585 70.9%,#808080 84.8%,#797979 98.8%)"></i>
<i style="left:392px;top:511px;height:36px;background:linear-gradient(#7b7b7b 1.4%,#818181 17.6%,#848484 33.8%,#858585 50.0%,#848484 66.2%,#808080 82.4%,#7a7a7a 98.6%)"></i>
<i style="left:393px;top:514px;height:30px;background:linear-gradient(#7c7c7c 1.7%,#808080 21.0%,#828282 40.3%,#828282 59.7%,#808080 79.0%,#7b7b7b 98.3%)"></i>
<i style="left:394px;top:517px;height:24px;background:linear-gradient(#7c7c7c 2.1%,#808080 34.0%,#808080 66.0%,#7c7c7c 97.9%)"></i>
<i style="left:395px;top:522px;height:14px;background:linear-gradient(#7d7d7d 3.6%,#7d7d7d 96.4%)"></i>
</div>

<!-- right strips -->
<div class="a" style="left:657px;top:0;width:15px;height:22px;background:#2b2b2b"></div>
<div class="a" style="left:657px;top:22px;width:6px;height:765px;background:#2c2c2c"></div>
<svg class="a" style="left:668px;top:0" width="4" height="12" fill="#4a4a4a"><rect x="1" y="1" width="1" height="1"/><rect x="3" y="1" width="1" height="1"/><rect x="1" y="3" width="1" height="1"/><rect x="3" y="5" width="1" height="1"/><rect x="1" y="7" width="1" height="1"/><rect x="3" y="9" width="1" height="1"/></svg>
<div class="a" style="left:663px;top:22px;width:1px;height:765px;background:#3c3c40"></div>
<div class="a" style="left:664px;top:22px;width:8px;height:54px;background:#2e2e2e;box-shadow:inset 0 1px 0 #3f3f3f"></div>
<div class="a" style="left:664px;top:76px;width:8px;height:22px;background:#333333;box-shadow:inset 1px 1px 0 #3e3e3e,inset 0 -1px 0 #3e3e3e"></div>
<div class="a" style="left:664px;top:98px;width:8px;height:25px;background:#232323"></div>
<div class="a" style="left:664px;top:123px;width:8px;height:21px;background:#3c3c40"></div>
<div class="a" style="left:664px;top:144px;width:8px;height:589px;background:#262626"></div>
<div class="a" style="left:664px;top:733px;width:8px;height:17px;background:#3a3a3e"></div>
<div class="a" style="left:664px;top:750px;width:8px;height:22px;background:#262626"></div>
<div class="a" style="left:664px;top:772px;width:8px;height:8px;background:#3a3a3e"></div>
<div class="a" style="left:664px;top:780px;width:8px;height:12px;background:#262626"></div>
<svg class="a" style="left:664px;top:736px" width="8" height="56" viewBox="664 736 8 56">
<path d="M669.5,741 L672,739 V743 Z" fill="#c8c8c8"/>
<path d="M669.5,756 L671,761 L672,758" fill="none" stroke="#2a6cf0" stroke-width="1.3"/>
<rect x="670" y="764" width="2" height="1.2" fill="#2a6cf0"/>
<rect x="669" y="788" width="3" height="1.2" fill="#d8e4f0"/>
</svg>
<div class="a" style="left:0;top:787px;width:663px;height:5px;background:#2b2b2b"></div>

<!-- tab texts -->
<svg class="a" style="left:14px;top:9px" width="14" height="14" viewBox="14 9 14 14">
<circle cx="20.6" cy="15.6" r="5.2" fill="#d6d6d6"/>
<circle cx="20.7" cy="12.4" r="0.9" fill="#111"/>
<path d="M19.1,14.2 H21.4 V16.9 H22 V17.7 H19.1 V16.9 H19.9 V15 H19.1 Z" fill="#111"/>
</svg>
<div class="t" style="left:31px;top:12px;color:#c0c0c0;letter-spacing:0.95px">Inspector</div>
<svg class="a" style="left:113px;top:9px" width="16" height="12" viewBox="113 9 16 12" fill="#d4d4d4">
<rect x="115" y="11" width="2" height="2"/><rect x="118" y="12" width="8" height="1"/>
<rect x="117" y="14" width="2" height="2"/><rect x="120" y="15" width="6" height="1"/>
<rect x="117" y="17" width="2" height="2"/><rect x="120" y="18" width="6" height="1"/>
</svg>
<div class="t" style="left:130px;top:12px;color:#a8a8a8;letter-spacing:0.9px">Hierarchy</div>
<!-- lock & menu -->
<svg class="a" style="left:620px;top:8px" width="36" height="16" viewBox="620 8 36 16">
<rect x="624.8" y="16.8" width="7.2" height="5.1" fill="#8a8a8a"/>
<path d="M626.4,15.2 A2.3,2.3 0 0 1 631,15.6 V17" fill="none" stroke="#8a8a8a" stroke-width="1.4"/>
<path d="M638,18 H643 L640.5,21 Z" fill="#c8c8c8"/>
<rect x="644" y="17" width="8" height="1" fill="#c8c8c8"/>
<rect x="644" y="19" width="8" height="1" fill="#c8c8c8"/>
<rect x="644" y="21" width="8" height="1" fill="#c8c8c8"/>
</svg>

<!-- header -->
<svg class="a" style="left:8px;top:26px" width="28" height="26" viewBox="8 26 28 26">
<path d="M20.9,30 L31.1,33.5 L31.1,44.3 L20.9,49.1 L10.9,45 L10.9,33.5 Z" fill="none" stroke="#222" stroke-width="1" opacity="0.6"/>
<path d="M20.9,30 L31.1,33.5 L20.9,37.3 L10.9,33.5 Z" fill="url(#cg)"/>
<path d="M10.9,33.5 L20.9,37.3 L20.9,49.1 L10.9,45 Z" fill="#5ab2e4"/>
<path d="M20.9,37.3 L31.1,33.5 L31.1,44.3 L20.9,49.1 Z" fill="#e0520c"/>
<path d="M11.3,46 H19 L15.2,50.2 Z" fill="#c8c8c8"/>
</svg>
<div class="a" style="left:58px;top:28px;width:523px;height:15px;background:#404040;border-top:1px solid #262626;border-left:1px solid #2c2c2c;border-right:1px solid #303030;border-bottom:1px solid #353535"></div>
<div class="cb" style="left:41px;top:30px"></div><svg class="a" style="left:41px;top:30px;overflow:visible" width="12" height="12"><path d="M2.6,4.9 L5.8,8.5 L11.2,0.6" fill="none" stroke="#f4f4f4" stroke-width="1.8" stroke-linecap="round" stroke-linejoin="round"/></svg><div class="cb" style="left:587px;top:30px;background:linear-gradient(#545454,#454545);box-shadow:inset 0 1px 0 #5e5e5e,0 0 0 1px #2c2c2c,0 1px 1px #222"></div><div class="cb" style="left:41px;top:89px"></div><svg class="a" style="left:41px;top:89px;overflow:visible" width="12" height="12"><path d="M2.6,4.9 L5.8,8.5 L11.2,0.6" fill="none" stroke="#f4f4f4" stroke-width="1.8" stroke-linecap="round" stroke-linejoin="round"/></svg><div class="cb" style="left:41px;top:108px"></div><svg class="a" style="left:41px;top:108px;overflow:visible" width="12" height="12"><path d="M2.6,4.9 L5.8,8.5 L11.2,0.6" fill="none" stroke="#f4f4f4" stroke-width="1.8" stroke-linecap="round" stroke-linejoin="round"/></svg><div class="cb" style="left:41px;top:127px"></div><svg class="a" style="left:41px;top:127px;overflow:visible" width="12" height="12"><path d="M2.6,4.9 L5.8,8.5 L11.2,0.6" fill="none" stroke="#f4f4f4" stroke-width="1.8" stroke-linecap="round" stroke-linejoin="round"/></svg><div class="cb" style="left:41px;top:146px"></div><svg class="a" style="left:41px;top:146px;overflow:visible" width="12" height="12"><path d="M2.6,4.9 L5.8,8.5 L11.2,0.6" fill="none" stroke="#f4f4f4" stroke-width="1.8" stroke-linecap="round" stroke-linejoin="round"/></svg>
<div class="t" style="left:61px;top:31px;letter-spacing:1.0px">Main Camera</div>
<div class="t" style="left:601px;top:30px;letter-spacing:0.9px">Static</div>
<svg class="a" style="left:640px;top:32px" width="12" height="8" viewBox="640 32 12 8"><path d="M642,33.8 H650.8 L646.4,38.7 Z" fill="#c4c4c4"/></svg>
<div class="t" style="left:32px;top:50px;letter-spacing:1.1px">Tag</div>
<div class="dd" style="left:59px;top:48px;width:273px"></div>
<div class="t" style="left:64px;top:51px;font-size:9px;letter-spacing:1.2px;color:#c4c4c4">MainCamera</div>
<div class="t" style="left:339.5px;top:50px;letter-spacing:1.1px">Layer</div>
<div class="dd" style="left:379px;top:48px;width:273px"></div>
<div class="t" style="left:384px;top:51px;font-size:9px;letter-spacing:1.0px;color:#c4c4c4">Default</div>
<svg class="a" style="left:321px;top:50px" width="7" height="11" viewBox="321 50 7 11"><path d="M322.5,55 H326.3 L324.4,51.5 Z M322.5,56 H326.3 L324.4,59.5 Z" fill="#a8a8a8"/></svg><svg class="a" style="left:641px;top:50px" width="7" height="11" viewBox="641 50 7 11"><path d="M642.5,55 H646.3 L644.4,51.5 Z M642.5,56 H646.3 L644.4,59.5 Z" fill="#a8a8a8"/></svg>

<!-- separators -->
<div class="sep" style="top:65px"></div>
<div class="sep" style="top:84px"></div>
<div class="sep" style="top:103px"></div>
<div class="sep" style="top:122px"></div>
<div class="sep" style="top:141px"></div>
<div class="sep" style="top:160px"></div>
<div class="sep" style="top:199px"></div>

<!-- component rows -->
<div class="tri" style="left:11px;top:71px"></div>
<div class="tri" style="left:11px;top:90px"></div>
<div class="tri" style="left:11px;top:109px"></div>
<div class="tri" style="left:11px;top:128px"></div>
<div class="tri" style="left:11px;top:147px"></div>
<div class="a" style="left:10px;top:167px;width:0;height:0;border-left:4.5px solid transparent;border-right:4.5px solid transparent;border-top:8.5px solid #6a6a6a"></div>

<!-- component icons -->
<svg class="a" style="left:18px;top:66px" width="24" height="114" viewBox="18 66 24 114">
<!-- transform -->
<path d="M30,68.8 V76.3 M30,76.3 L23.9,79.9 M30,76.3 L36.1,79.9" fill="none" stroke="#1a1a22" stroke-width="3.6" opacity="0.5"/>
<path d="M30,68.8 V76.3" stroke="#88cc00" stroke-width="2.4"/>
<path d="M30,76.5 L23.9,79.9" stroke="#22a4e6" stroke-width="2.4"/>
<path d="M30.2,76.5 L36.1,79.9" stroke="#e00000" stroke-width="2.4"/>
<!-- camera -->
<g stroke="#15191c" stroke-width="1.1" fill="#15191c" opacity="0.85">
<circle cx="23.9" cy="93.5" r="2"/><circle cx="30" cy="91.5" r="2.5"/><rect x="25.3" y="94.2" width="7.2" height="5.4"/><path d="M33,96 L36.2,93.8 V98.2 Z"/>
</g>
<circle cx="23.9" cy="93.5" r="2" fill="#75858e"/>
<circle cx="30" cy="91.5" r="2.5" fill="#75858e"/>
<rect x="25.3" y="94.2" width="7.2" height="5.4" fill="url(#sl)"/>
<rect x="25.3" y="96.6" width="7.2" height="0.6" fill="#4a5860" opacity="0.6"/>
<path d="M33,96 L36.2,93.8 V98.2 Z" fill="#7a8a92"/>
<!-- gui layer -->
<rect x="22.8" y="110.8" width="9.3" height="9.3" fill="url(#sl)"/>
<rect x="26.2" y="106.3" width="10.4" height="10.3" fill="#161616"/>
<rect x="26.7" y="106.8" width="9.4" height="9.3" fill="#f6f6f6"/>
<!-- flare layer -->
<rect x="22.3" y="129.4" width="10.3" height="10.1" fill="#1c1c1c" opacity="0.5"/>
<rect x="22.8" y="129.9" width="9.3" height="9.1" fill="url(#sl)"/>
<circle cx="33" cy="128.8" r="3.2" fill="url(#fl)"/>
<path d="M30.6,128.8 H35.4 M33,126.4 V131.2" stroke="#ffd8a0" stroke-width="0.7" opacity="0.8"/>
<circle cx="33" cy="128.8" r="1.1" fill="#ffffff"/>
<!-- audio listener -->
<circle cx="30.05" cy="150.8" r="7.2" fill="#151a26"/>
<circle cx="30.05" cy="150.8" r="5.8" fill="none" stroke="url(#or)" stroke-width="2.2"/>
<circle cx="30.05" cy="150.8" r="3.1" fill="url(#or)"/>
<!-- c# doc -->
<path d="M23.7,163.5 H32.6 L35.4,166.3 V177.1 H23.7 Z" fill="#101010"/>
<path d="M24.4,164.2 H32.3 L34.7,166.6 V176.4 H24.4 Z" fill="#e8eef3"/>
<path d="M30.9,167.3 H28.3 Q26.5,167.3 26.5,169.3 V173.3 Q26.5,175.2 28.3,175.2 H30.9" fill="none" stroke="#1a72b0" stroke-width="1.3"/>
<path d="M28.9,170.3 H33.9 M28.9,172.5 H33.9 M30.4,169 V173.9 M32.45,169 V173.9" stroke="#1a72b0" stroke-width="1.1"/>
</svg>

<div class="t b" style="left:56.5px;top:71px;letter-spacing:1.1px">Transform</div>
<div class="t b" style="left:56.5px;top:90px;letter-spacing:0.75px">Camera</div>
<div class="t b" style="left:56.5px;top:109px;letter-spacing:0.9px">GUI Layer</div>
<div class="t b" style="left:56.5px;top:128px;letter-spacing:1.05px">Flare Layer</div>
<div class="t b" style="left:56.5px;top:147px;letter-spacing:0.7px">Audio Listener</div>
<div class="t b" style="left:56.5px;top:166px;letter-spacing:0.8px">New Behaviour Script (Script)</div>
<svg class="a" style="left:618px;top:66px;will-change:transform" width="36" height="18" viewBox="618 66 36 18">
<rect x="620.3" y="67.9" width="12.6" height="13.6" rx="0.6" fill="#1b2645"/>
<rect x="632" y="68.6" width="0.9" height="12.4" fill="#3a5078"/>
<rect x="621.3" y="69" width="1.2" height="11.6" fill="#b4c6e0"/>
<rect x="622.5" y="69" width="0.8" height="11.8" fill="#22304e"/>
<rect x="622.8" y="69" width="9.3" height="1.8" fill="#f4f6fa"/>
<rect x="630.5" y="69" width="1.5" height="11.6" fill="#e4eaf2"/>
<rect x="623.3" y="71" width="7.2" height="9.9" fill="url(#bk)"/>
<text x="626.9" y="78.2" font-family="Liberation Sans" font-weight="bold" font-size="7.4" text-anchor="middle" fill="#f2f4f8">?</text>
<g transform="translate(643,74)" fill="#cdcdcd">
<circle r="3.5"/>
<rect x="-1.05" y="-5.1" width="2.1" height="10.2" rx="0.5"/><rect x="-1.05" y="-5.1" width="2.1" height="10.2" rx="0.5" transform="rotate(45)"/><rect x="-1.05" y="-5.1" width="2.1" height="10.2" rx="0.5" transform="rotate(90)"/><rect x="-1.05" y="-5.1" width="2.1" height="10.2" rx="0.5" transform="rotate(135)"/>
<circle r="1.7" fill="#404040"/>
</g>
<path d="M647.8,75.9 H651.4 L650,79.9 H649.2 Z" fill="#cdcdcd"/>
</svg>
<svg class="a" style="left:618px;top:85px;will-change:transform" width="36" height="18" viewBox="618 66 36 18">
<rect x="620.3" y="67.9" width="12.6" height="13.6" rx="0.6" fill="#1b2645"/>
<rect x="632" y="68.6" width="0.9" height="12.4" fill="#3a5078"/>
<rect x="621.3" y="69" width="1.2" height="11.6" fill="#b4c6e0"/>
<rect x="622.5" y="69" width="0.8" height="11.8" fill="#22304e"/>
<rect x="622.8" y="69" width="9.3" height="1.8" fill="#f4f6fa"/>
<rect x="630.5" y="69" width="1.5" height="11.6" fill="#e4eaf2"/>
<rect x="623.3" y="71" width="7.2" height="9.9" fill="url(#bk)"/>
<text x="626.9" y="78.2" font-family="Liberation Sans" font-weight="bold" font-size="7.4" text-anchor="middle" fill="#f2f4f8">?</text>
<g transform="translate(643,74)" fill="#cdcdcd">
<circle r="3.5"/>
<rect x="-1.05" y="-5.1" width="2.1" height="10.2" rx="0.5"/><rect x="-1.05" y="-5.1" width="2.1" height="10.2" rx="0.5" transform="rotate(45)"/><rect x="-1.05" y="-5.1" width="2.1" height="10.2" rx="0.5" transform="rotate(90)"/><rect x="-1.05" y="-5.1" width="2.1" height="10.2" rx="0.5" transform="rotate(135)"/>
<circle r="1.7" fill="#404040"/>
</g>
<path d="M647.8,75.9 H651.4 L650,79.9 H649.2 Z" fill="#cdcdcd"/>
</svg>
<svg class="a" style="left:618px;top:104px;will-change:transform" width="36" height="18" viewBox="618 66 36 18">
<rect x="620.3" y="67.9" width="12.6" height="13.6" rx="0.6" fill="#1b2645"/>
<rect x="632" y="68.6" width="0.9" height="12.4" fill="#3a5078"/>
<rect x="621.3" y="69" width="1.2" height="11.6" fill="#b4c6e0"/>
<rect x="622.5" y="69" width="0.8" height="11.8" fill="#22304e"/>
<rect x="622.8" y="69" width="9.3" height="1.8" fill="#f4f6fa"/>
<rect x="630.5" y="69" width="1.5" height="11.6" fill="#e4eaf2"/>
<rect x="623.3" y="71" width="7.2" height="9.9" fill="url(#bk)"/>
<text x="626.9" y="78.2" font-family="Liberation Sans" font-weight="bold" font-size="7.4" text-anchor="middle" fill="#f2f4f8">?</text>
<g transform="translate(643,74)" fill="#cdcdcd">
<circle r="3.5"/>
<rect x="-1.05" y="-5.1" width="2.1" height="10.2" rx="0.5"/><rect x="-1.05" y="-5.1" width="2.1" height="10.2" rx="0.5" transform="rotate(45)"/><rect x="-1.05" y="-5.1" width="2.1" height="10.2" rx="0.5" transform="rotate(90)"/><rect x="-1.05" y="-5.1" width="2.1" height="10.2" rx="0.5" transform="rotate(135)"/>
<circle r="1.7" fill="#404040"/>
</g>
<path d="M647.8,75.9 H651.4 L650,79.9 H649.2 Z" fill="#cdcdcd"/>
</svg>
<svg class="a" style="left:618px;top:123px;will-change:transform" width="36" height="18" viewBox="618 66 36 18">
<rect x="620.3" y="67.9" width="12.6" height="13.6" rx="0.6" fill="#1b2645"/>
<rect x="632" y="68.6" width="0.9" height="12.4" fill="#3a5078"/>
<rect x="621.3" y="69" width="1.2" height="11.6" fill="#b4c6e0"/>
<rect x="622.5" y="69" width="0.8" height="11.8" fill="#22304e"/>
<rect x="622.8" y="69" width="9.3" height="1.8" fill="#f4f6fa"/>
<rect x="630.5" y="69" width="1.5" height="11.6" fill="#e4eaf2"/>
<rect x="623.3" y="71" width="7.2" height="9.9" fill="url(#bk)"/>
<text x="626.9" y="78.2" font-family="Liberation Sans" font-weight="bold" font-size="7.4" text-anchor="middle" fill="#f2f4f8">?</text>
<g transform="translate(643,74)" fill="#cdcdcd">
<circle r="3.5"/>
<rect x="-1.05" y="-5.1" width="2.1" height="10.2" rx="0.5"/><rect x="-1.05" y="-5.1" width="2.1" height="10.2" rx="0.5" transform="rotate(45)"/><rect x="-1.05" y="-5.1" width="2.1" height="10.2" rx="0.5" transform="rotate(90)"/><rect x="-1.05" y="-5.1" width="2.1" height="10.2" rx="0.5" transform="rotate(135)"/>
<circle r="1.7" fill="#404040"/>
</g>
<path d="M647.8,75.9 H651.4 L650,79.9 H649.2 Z" fill="#cdcdcd"/>
</svg>
<svg class="a" style="left:618px;top:142px;will-change:transform" width="36" height="18" viewBox="618 66 36 18">
<rect x="620.3" y="67.9" width="12.6" height="13.6" rx="0.6" fill="#1b2645"/>
<rect x="632" y="68.6" width="0.9" height="12.4" fill="#3a5078"/>
<rect x="621.3" y="69" width="1.2" height="11.6" fill="#b4c6e0"/>
<rect x="622.5" y="69" width="0.8" height="11.8" fill="#22304e"/>
<rect x="622.8" y="69" width="9.3" height="1.8" fill="#f4f6fa"/>
<rect x="630.5" y="69" width="1.5" height="11.6" fill="#e4eaf2"/>
<rect x="623.3" y="71" width="7.2" height="9.9" fill="url(#bk)"/>
<text x="626.9" y="78.2" font-family="Liberation Sans" font-weight="bold" font-size="7.4" text-anchor="middle" fill="#f2f4f8">?</text>
<g transform="translate(643,74)" fill="#cdcdcd">
<circle r="3.5"/>
<rect x="-1.05" y="-5.1" width="2.1" height="10.2" rx="0.5"/><rect x="-1.05" y="-5.1" width="2.1" height="10.2" rx="0.5" transform="rotate(45)"/><rect x="-1.05" y="-5.1" width="2.1" height="10.2" rx="0.5" transform="rotate(90)"/><rect x="-1.05" y="-5.1" width="2.1" height="10.2" rx="0.5" transform="rotate(135)"/>
<circle r="1.7" fill="#404040"/>
</g>
<path d="M647.8,75.9 H651.4 L650,79.9 H649.2 Z" fill="#cdcdcd"/>
</svg>
<svg class="a" style="left:618px;top:161px;will-change:transform" width="36" height="18" viewBox="618 66 36 18">
<rect x="620.3" y="67.9" width="12.6" height="13.6" rx="0.6" fill="#1b2645"/>
<rect x="632" y="68.6" width="0.9" height="12.4" fill="#3a5078"/>
<rect x="621.3" y="69" width="1.2" height="11.6" fill="#b4c6e0"/>
<rect x="622.5" y="69" width="0.8" height="11.8" fill="#22304e"/>
<rect x="622.8" y="69" width="9.3" height="1.8" fill="#f4f6fa"/>
<rect x="630.5" y="69" width="1.5" height="11.6" fill="#e4eaf2"/>
<rect x="623.3" y="71" width="7.2" height="9.9" fill="url(#bk)"/>
<text x="626.9" y="78.2" font-family="Liberation Sans" font-weight="bold" font-size="7.4" text-anchor="middle" fill="#f2f4f8">?</text>
<g transform="translate(643,74)" fill="#cdcdcd">
<circle r="3.5"/>
<rect x="-1.05" y="-5.1" width="2.1" height="10.2" rx="0.5"/><rect x="-1.05" y="-5.1" width="2.1" height="10.2" rx="0.5" transform="rotate(45)"/><rect x="-1.05" y="-5.1" width="2.1" height="10.2" rx="0.5" transform="rotate(90)"/><rect x="-1.05" y="-5.1" width="2.1" height="10.2" rx="0.5" transform="rotate(135)"/>
<circle r="1.7" fill="#404040"/>
</g>
<path d="M647.8,75.9 H651.4 L650,79.9 H649.2 Z" fill="#cdcdcd"/>
</svg>

<div class="t" style="left:22px;top:182px;letter-spacing:1.1px">Script</div>
<div class="a" style="left:273px;top:179px;width:362px;height:15px;background:#4a4a4a;border-top:1px solid #232323"></div>
<svg class="a" style="left:276px;top:181px" width="12" height="13" viewBox="276 181 12 13">
<path d="M277.4,182.3 H284.4 L286,183.9 V192 H277.4 Z" fill="#2a2a2a" opacity="0.7"/>
<path d="M277.8,182.6 H284.2 L285.7,184.1 V191.7 H277.8 Z" fill="#e2eaf0"/>
<path d="M281.6,184.6 H280.3 Q279,184.6 279,186 V188.6 Q279,190 280.3,190 H281.6" fill="none" stroke="#3a8cc0" stroke-width="1.2"/>
<path d="M282,186.5 H285 M282,188.3 H285 M283,185.6 V189.3 M284.2,185.6 V189.3" stroke="#3a8cc0" stroke-width="0.9"/>
</svg>
<div class="t" style="left:289px;top:182px;letter-spacing:0.9px">NewBehaviourScript</div>
<svg class="a" style="left:640px;top:180px" width="14" height="14" viewBox="640 180 14 14">
<circle cx="646.5" cy="186.4" r="3.1" fill="none" stroke="#c4c4c4" stroke-width="1.2"/>
<circle cx="646.5" cy="186.4" r="0.8" fill="#c4c4c4"/>
</svg>

<!-- add component -->
<div class="a" style="left:218px;top:211px;width:228px;height:21px;border-radius:3px;background:linear-gradient(#585858,#484848);box-shadow:inset 0 1px 0 #6a6a6a,0 0 0 1px #2c2c2c,0 1px 1px #262626"></div>
<div class="t" style="left:283px;top:215px;font-size:12px;letter-spacing:1.2px;color:#bcbcbc">Add Component</div>

<!-- bottom bar -->
<svg class="a" style="left:9px;top:251px" width="26" height="15" viewBox="9 251 26 15">
<g fill="none" stroke="#e2e2e2" stroke-width="1.2" stroke-linecap="round">
<path d="M13.2,254.9 Q12.4,258.5 13.4,262.6"/>
<path d="M14.6,255.8 H18.6 M14.6,257.8 H18.6 M16.7,255.2 V260.6 Q16.6,262.2 15,261.8 Q13.8,261.4 14.6,260.4 Q15.8,259.6 19.6,262"/>
<path d="M24.2,255.3 Q23.3,259 24.4,262.6"/>
<path d="M25.6,257.4 H30.8 M28.2,254.9 V261 Q28.1,263 26.6,263.8"/>
</g>
<rect x="30.4" y="254" width="1.8" height="1.8" fill="#e2e2e2"/>
</svg>
<div class="a" style="left:36px;top:257px;width:613px;height:1px;background:#6a6a6a"></div>
<div class="a" style="left:36px;top:258px;width:613px;height:1px;background:#111"></div>
<div class="a" style="left:36px;top:260px;width:613px;height:1px;background:#6a6a6a"></div>
<div class="a" style="left:36px;top:261px;width:613px;height:1px;background:#111"></div>

<!-- right panel icon bits -->
<svg class="a" style="left:664px;top:22px" width="8" height="70" viewBox="664 22 8 70">
<path d="M669.3,29.8 L671,35" fill="none" stroke="#3a9ee0" stroke-width="0.9"/>
<path d="M670.2,30 L671.4,33.5" stroke="#e8c040" stroke-width="0.8"/>
<rect x="669.5" y="38.6" width="3" height="1.2" fill="#bcd8f0"/>
<path d="M669.3,82 L671,86.8" fill="none" stroke="#3a9ee0" stroke-width="0.9"/>
<path d="M670.2,82.2 L671.4,85" stroke="#e8c040" stroke-width="0.8"/>
<rect x="669.5" y="89.5" width="3" height="1.2" fill="#bcd8f0"/>
</svg>
</body></html>
